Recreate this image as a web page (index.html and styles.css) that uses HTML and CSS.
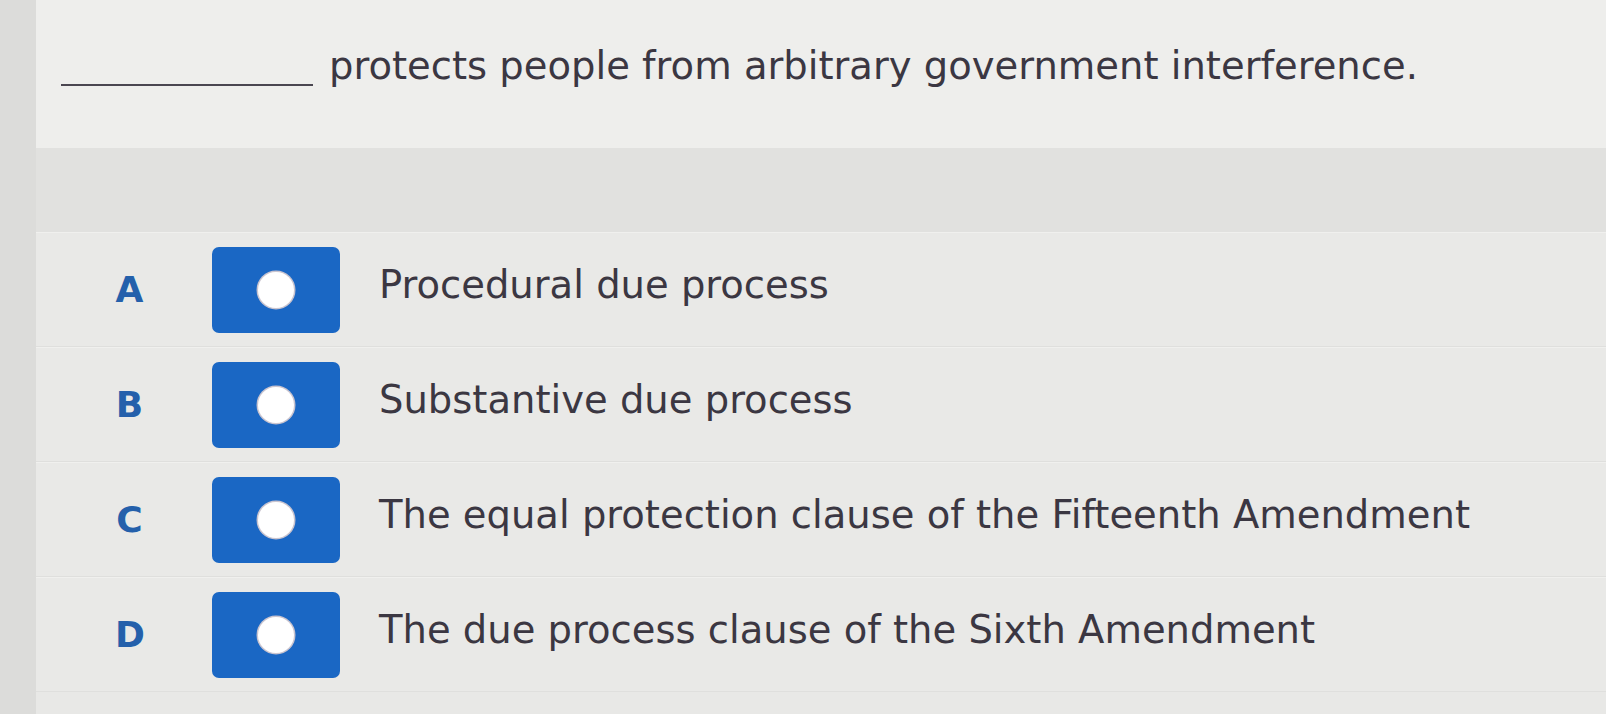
FILE: index.html
```html
<!DOCTYPE html>
<html lang="en">
<head>
    <meta charset="UTF-8">
    <meta name="viewport" content="width=device-width, initial-scale=1.0">
    <title>Question</title>
    <link rel="stylesheet" href="styles.css">
</head>
<body>
    <div class="sheet">
        <!-- Question stem -->
        <div class="question">
            <span class="blank"></span>
            <span class="stem">protects people from arbitrary government interference.</span>
        </div>

        <div class="spacer"></div>

        <!-- Answer choices -->
        <div class="choices">
            <div class="choice">
                <span class="choice-letter">A</span>
                <button class="choice-btn"><span class="dot"></span></button>
                <span class="choice-text">Procedural due process</span>
            </div>
            <div class="choice">
                <span class="choice-letter">B</span>
                <button class="choice-btn"><span class="dot"></span></button>
                <span class="choice-text">Substantive due process</span>
            </div>
            <div class="choice">
                <span class="choice-letter">C</span>
                <button class="choice-btn"><span class="dot"></span></button>
                <span class="choice-text">The equal protection clause of the Fifteenth Amendment</span>
            </div>
            <div class="choice">
                <span class="choice-letter">D</span>
                <button class="choice-btn"><span class="dot"></span></button>
                <span class="choice-text">The due process clause of the Sixth Amendment</span>
            </div>
        </div>
    </div>
</body>
</html>
```

FILE: styles.css
```css
body {
    margin: 0;
    background: #dcdcda;
    font-family: "DejaVu Sans", Verdana, sans-serif;
    color: #3b3742;
    height: 714px;
    overflow: hidden;
}

.sheet {
    margin-left: 36px;
    background: #e8e8e6;
    min-height: 714px;
}

.question {
    height: 148px;
    display: flex;
    align-items: flex-start;
    padding-left: 25px;
    padding-top: 40px;
    box-sizing: border-box;
    background: #eeeeec;
}

.blank {
    display: inline-block;
    width: 252px;
    height: 44px;
    border-bottom: 2px solid #4a4650;
    margin-right: 16px;
}

.stem {
    font-size: 38.5px;
    line-height: 46px;
    margin-top: 3px;
}

.spacer {
    height: 84px;
    background: #e1e1df;
}

.choice {
    height: 113px;
    display: flex;
    align-items: center;
    padding-left: 79px;
    border-top: 1px solid #f0f0ee;
    border-bottom: 1.5px solid #dfdfdd;
    background: #e9e9e7;
}

.choice-letter {
    width: 29px;
    text-align: center;
    font-size: 36px;
    font-weight: bold;
    color: #2460ab;
    margin-right: 68px;
}

.choice-btn {
    width: 128px;
    height: 86px;
    border: none;
    border-radius: 7px;
    background: #1a67c4;
    display: flex;
    align-items: center;
    justify-content: center;
    padding: 0;
    margin-right: 39px;
    cursor: pointer;
}

.dot {
    width: 36px;
    height: 36px;
    border-radius: 50%;
    background: #ffffff;
    box-shadow: 0 0 0 1.5px #c9c4cf;
}

.choice-text {
    font-size: 38.5px;
    margin-top: -10px;
}
```
